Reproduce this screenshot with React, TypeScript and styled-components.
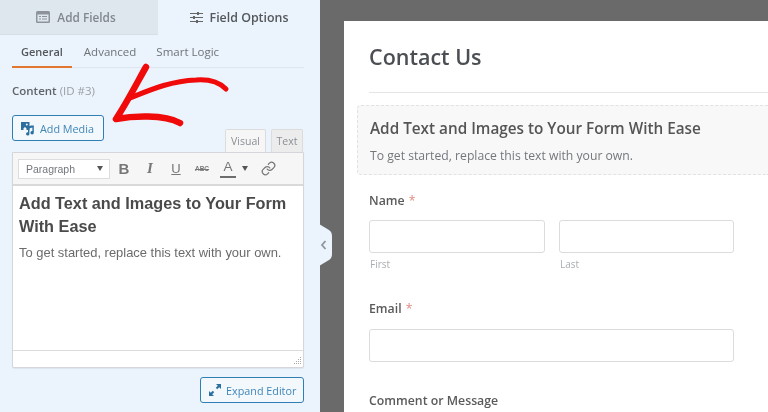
import React from "react";
import styled, { createGlobalStyle } from "styled-components";
import { Link as LinkIcon } from "lucide-react";

const Global = createGlobalStyle`
  html, body { margin: 0; padding: 0; width: 768px; height: 412px; overflow: hidden; background: #6b6b6b; }
  * { box-sizing: border-box; }
  body { font-family: "Open Sans", "Noto Sans", sans-serif; color: #444; }
`;

const Page = styled.div`
  position: relative;
  display: flex;
  width: 768px;
  height: 412px;
  overflow: hidden;
  background: #6a6a6a;
  filter: blur(0.5px);
`;

const Sidebar = styled.aside`
  width: 320px;
  height: 412px;
  flex: none;
  background: #ebf3fc;
  display: flex;
  flex-direction: column;
`;

const TabBar = styled.div`
  display: flex;
  height: 35px;
`;

const MainTab = styled.div<{ $active?: boolean }>`
  flex: none;
  width: ${(p) => (p.$active ? "162px" : "158px")};
  display: flex;
  align-items: center;
  justify-content: center;
  gap: 7px;
  padding-right: ${(p) => (p.$active ? "0" : "6px")};
  font-size: ${(p) => (p.$active ? "12.4px" : "11.8px")};
  font-weight: 600;
  color: ${(p) => (p.$active ? "#54575b" : "#81878d")};
  background: ${(p) => (p.$active ? "#ebf3fc" : "#dfe7ee")};
  border-bottom: 1px solid ${(p) => (p.$active ? "#ebf3fc" : "#d6dee6")};
`;

const SubTabs = styled.div`
  display: flex;
  height: 33px;
  margin: 0 16px 0 12px;
  border-bottom: 1px solid #dde5ee;
`;

const SubTab = styled.div<{ $active?: boolean }>`
  height: 33px;
  padding: 8px 9px 0;
  margin-right: ${(p) => (p.$active ? "3px" : "2px")};
  font-size: ${(p) => (p.$active ? "11px" : "11.5px")};
  line-height: 18px;
  font-weight: ${(p) => (p.$active ? 600 : 400)};
  color: ${(p) => (p.$active ? "#54585c" : "#6e7478")};
  border-bottom: ${(p) => (p.$active ? "2px solid #e27730" : "none")};
`;

const FieldLabel = styled.div`
  margin: 15px 0 0 12px;
  font-size: 11.5px;
  line-height: 16px;
  font-weight: 600;
  color: #5f6468;
  span { font-weight: 400; color: #9a9fa4; }
`;

const MediaRow = styled.div`
  display: flex;
  justify-content: space-between;
  align-items: flex-end;
  height: 37px;
  margin: 16px 17px 0 12px;
`;

const OutlineButton = styled.div`
  display: inline-flex;
  align-items: center;
  height: 26px;
  border: 1px solid #2f7fb5;
  border-radius: 3px;
  background: #f3f8fd;
  color: #3f86b8;
  font-size: 10.8px;
  gap: 5px;
`;

const MediaButton = styled(OutlineButton)`
  width: 92px;
  padding-left: 7px;
  align-self: flex-start;
`;

const ModeTabs = styled.div`
  display: flex;
  gap: 5px;
`;

const ModeTab = styled.div<{ $active?: boolean }>`
  height: 23px;
  width: ${(p) => (p.$active ? "41px" : "32px")};
  display: flex;
  align-items: center;
  justify-content: center;
  font-size: 10.5px;
  color: #8b9095;
  background: ${(p) => (p.$active ? "#f6f6f6" : "#ececec")};
  border: 1px solid #dcdcdc;
  border-bottom: none;
  border-radius: 2px 2px 0 0;
`;

const Editor = styled.div`
  margin: 0 16px 0 12px;
  height: 216px;
  display: flex;
  flex-direction: column;
  background: #fff;
  border: 1px solid #d4d6d9;
  border-radius: 0 0 2px 2px;
  box-shadow: 0 1px 1px rgba(0, 0, 0, 0.06);
`;

const Toolbar = styled.div`
  height: 33px;
  flex: none;
  display: flex;
  align-items: center;
  padding: 0 0 0 5px;
  background: #f6f6f6;
  border-bottom: 2px solid #d9d9d9;
`;

const FormatSelect = styled.div`
  width: 92px;
  height: 20px;
  display: flex;
  align-items: center;
  justify-content: space-between;
  padding: 0 6px 0 7px;
  background: #fff;
  border: 1px solid #dddddd;
  font-family: "Liberation Sans", Arial, sans-serif;
  font-size: 10.5px;
  color: #72777c;
`;

const Caret = styled.span<{ $gap?: number }>`
  width: 0;
  height: 0;
  margin-left: ${(p) => p.$gap ?? 0}px;
  border-left: 3.5px solid transparent;
  border-right: 3.5px solid transparent;
  border-top: 5px solid #555;
`;

const ToolGlyph = styled.span<{ $w: number; $gap: number }>`
  width: ${(p) => p.$w}px;
  margin-left: ${(p) => p.$gap}px;
  display: inline-flex;
  align-items: center;
  justify-content: center;
  font-family: "Liberation Sans", Arial, sans-serif;
  color: #777;
  font-size: 15px;
`;

const Bold = styled(ToolGlyph)`font-weight: 700;`;
const Italic = styled(ToolGlyph)`font-family: "Liberation Serif", serif; font-style: italic; font-weight: 700;`;
const Under = styled(ToolGlyph)`text-decoration: underline; font-size: 13px;`;
const Strike = styled(ToolGlyph)`font-size: 6.5px; font-weight: 700; text-decoration: line-through;`;
const Color = styled(ToolGlyph)`
  font-size: 13.5px;
  line-height: 15px;
  height: 19px;
  align-items: flex-start;
  position: relative;
  &::after {
    content: "";
    position: absolute;
    left: 1px;
    right: 1px;
    bottom: 0;
    height: 2.5px;
    background: #6d6d6d;
  }
`;

const LinkSlot = styled.span`
  display: inline-flex;
  margin-left: 13px;
`;

const Content = styled.div`
  flex: 1;
  padding: 6px 6px 0;
  font-family: "Liberation Sans", Arial, sans-serif;
  border-bottom: 1px solid #dcdcdc;
`;

const ContentTitle = styled.div`
  font-size: 16.25px;
  line-height: 23px;
  font-weight: 700;
  color: #4a4a4a;
`;

const ContentText = styled.div`
  margin-top: 7px;
  font-size: 12.95px;
  line-height: 16px;
  color: #6b6b6b;
`;

const StatusBar = styled.div`
  height: 16px;
  flex: none;
  display: flex;
  justify-content: flex-end;
  align-items: flex-end;
  padding: 0 1px 1px 0;
`;

const ExpandRow = styled.div`
  display: flex;
  justify-content: flex-end;
  margin: 9px 16px 0 0;
`;

const ExpandButton = styled(OutlineButton)`
  width: 104px;
  padding-left: 7px;
  gap: 4px;
`;

const Gutter = styled.div`
  flex: 1;
  padding: 21px 0 0 24px;
  min-width: 0;
`;

const Card = styled.main`
  width: 424px;
  height: 391px;
  background: #fff;
  padding: 0 0 0 25px;
`;

const FormTitle = styled.h1`
  margin: 0;
  padding-top: 20px;
  height: 72px;
  border-bottom: 1px solid #e5e5e5;
  font-size: 21.5px;
  line-height: 32px;
  font-weight: 600;
  color: #4b4f53;
`;

const ContentBlock = styled.section`
  margin: 12px 0 0 -12px;
  height: 70px;
  padding: 11px 12px 0;
  background: #f8f8f8;
  border: 1px dashed #e2e2e2;
  border-right: none;
  border-radius: 4px 0 0 4px;
`;

const BlockTitle = styled.div`
  font-size: 15.3px;
  line-height: 22px;
  font-weight: 600;
  color: #555;
`;

const BlockText = styled.div`
  margin-top: 9px;
  font-size: 12.2px;
  line-height: 16px;
  color: #74787c;
`;

const Label = styled.div<{ $top: number }>`
  margin-top: ${(p) => p.$top}px;
  font-size: 12.3px;
  line-height: 16px;
  font-weight: 600;
  color: #5a5a5a;
  em { font-style: normal; font-weight: 400; color: #e08a80; margin-left: 1px; }
`;

const NameRow = styled.div`
  display: grid;
  grid-template-columns: 176px 175px;
  column-gap: 14px;
  margin-top: 11px;
`;

const Input = styled.div`
  height: 33px;
  border: 1px solid #dcdcdc;
  border-radius: 3px;
  background: #fff;
`;

const EmailInput = styled(Input)`
  width: 365px;
  margin-top: 12px;
`;

const SubLabel = styled.div`
  margin: 4px 0 0 1px;
  font-size: 10px;
  line-height: 14px;
  color: #a9adb1;
`;

const ToggleHandle = styled.div`
  position: absolute;
  left: 319px;
  top: 224px;
  width: 14px;
  height: 42px;
  pointer-events: none;
`;

const ArrowOverlay = styled.svg`
  position: absolute;
  left: 100px;
  top: 55px;
  pointer-events: none;
`;

const Field = ({ label, sub }: { label?: string; sub: string }) => (
  <div>
    <Input aria-label={label} />
    <SubLabel>{sub}</SubLabel>
  </div>
);

export default function App() {
  return (
    <Page>
      <Global />
      <Sidebar>
        <TabBar>
          <MainTab>
            <svg width="14" height="12" viewBox="0 0 14 12">
              <rect x="0" y="0" width="14" height="12" rx="1.5" fill="#8d9399" />
              <rect x="1.5" y="3.5" width="11" height="7" fill="#dfe7ee" />
              <path d="M3 5.5h2M6 5.5h5M3 8h2M6 8h5" stroke="#8d9399" strokeWidth="1" />
            </svg>
            Add Fields
          </MainTab>
          <MainTab $active>
            <svg width="13" height="13" viewBox="0 0 13 13" fill="none" stroke="#666" strokeWidth="1.2">
              <path d="M0 2.5h13M0 6.5h13M0 10.5h13" />
              <path d="M8 1v3M4 5v3M7 9v3" strokeWidth="2" />
            </svg>
            Field Options
          </MainTab>
        </TabBar>
        <SubTabs>
          <SubTab $active>General</SubTab>
          <SubTab>Advanced</SubTab>
          <SubTab>Smart Logic</SubTab>
        </SubTabs>
        <FieldLabel>
          Content <span>(ID #3)</span>
        </FieldLabel>
        <MediaRow>
          <MediaButton>
            <svg width="15" height="15" viewBox="0 0 15 15" fill="#2a6f9f">
              <path d="M1 1h8.5v8H6.5V7.5l-1.5-1.5L3.5 7.2V9H1z" fillRule="evenodd" />
              <circle cx="6.8" cy="3.4" r="1" fill="#f3f8fd" />
              <path d="M11 4.5h2.8v7.3a1.7 1.7 0 1 1-1.4-1.7V6.5l-3 .8v5.6a1.7 1.7 0 1 1-1.4-1.7V5.7z" />
            </svg>
            Add Media
          </MediaButton>
          <ModeTabs>
            <ModeTab $active>Visual</ModeTab>
            <ModeTab>Text</ModeTab>
          </ModeTabs>
        </MediaRow>
        <Editor>
          <Toolbar>
            <FormatSelect>
              Paragraph
              <Caret />
            </FormatSelect>
            <Bold $w={16} $gap={6}>B</Bold>
            <Italic $w={16} $gap={10}>I</Italic>
            <Under $w={16} $gap={10}>U</Under>
            <Strike $w={18} $gap={9}>ABC</Strike>
            <Color $w={18} $gap={8}>A</Color>
            <Caret $gap={5} />
            <LinkSlot>
              <LinkIcon size={15} color="#777" strokeWidth={2} />
            </LinkSlot>
          </Toolbar>
          <Content>
            <ContentTitle>
              Add Text and Images to Your Form
              <br />
              With Ease
            </ContentTitle>
            <ContentText>To get started, replace this text with your own.</ContentText>
          </Content>
          <StatusBar>
            <svg width="9" height="9" viewBox="0 0 9 9" fill="#aaa">
              <path d="M7 0h1v1H7zM5 2h1v1H5zM7 2h1v1H7zM3 4h1v1H3zM5 4h1v1H5zM7 4h1v1H7zM1 6h1v1H1zM3 6h1v1H3zM5 6h1v1H5zM7 6h1v1H7z" />
            </svg>
          </StatusBar>
        </Editor>
        <ExpandRow>
          <ExpandButton>
            <svg width="14" height="14" viewBox="0 0 14 14" fill="#2a6f9f">
              <path d="M8 1h5v5l-1.8-1.8-2 2-1.4-1.4 2-2zM6 13H1V8l1.8 1.8 2-2 1.4 1.4-2 2z" />
            </svg>
            Expand Editor
          </ExpandButton>
        </ExpandRow>
      </Sidebar>
      <Gutter>
        <Card>
          <FormTitle>Contact Us</FormTitle>
          <ContentBlock>
            <BlockTitle>Add Text and Images to Your Form With Ease</BlockTitle>
            <BlockText>To get started, replace this text with your own.</BlockText>
          </ContentBlock>
          <Label $top={18}>
            Name <em>*</em>
          </Label>
          <NameRow>
            <Field label="First" sub="First" />
            <Field label="Last" sub="Last" />
          </NameRow>
          <Label $top={30}>
            Email <em>*</em>
          </Label>
          <EmailInput />
          <Label $top={31}>Comment or Message</Label>
        </Card>
      </Gutter>
      <ToggleHandle>
        <svg width="14" height="42" viewBox="0 0 14 42">
          <path d="M0 0 L10 6 Q13 8 13 12 V30 Q13 34 10 36 L0 42Z" fill="#ebf3fc" />
          <path d="M6.5 17 L3 21 L6.5 25" fill="none" stroke="#8c96a0" strokeWidth="1.8" />
        </svg>
      </ToggleHandle>
      <ArrowOverlay width="135" height="75" viewBox="100 55 135 75" fill="none" stroke="#f00a0a" strokeLinecap="round" strokeLinejoin="round">
        <path d="M146 67 C139 79 128 101 116 119 C132 116 164 114 180 123" strokeWidth="6.5" />
        <path d="M130 98 C150 90 170 81 196 80 C210 79 220 83 226 89" strokeWidth="5" />
      </ArrowOverlay>
    </Page>
  );
}
